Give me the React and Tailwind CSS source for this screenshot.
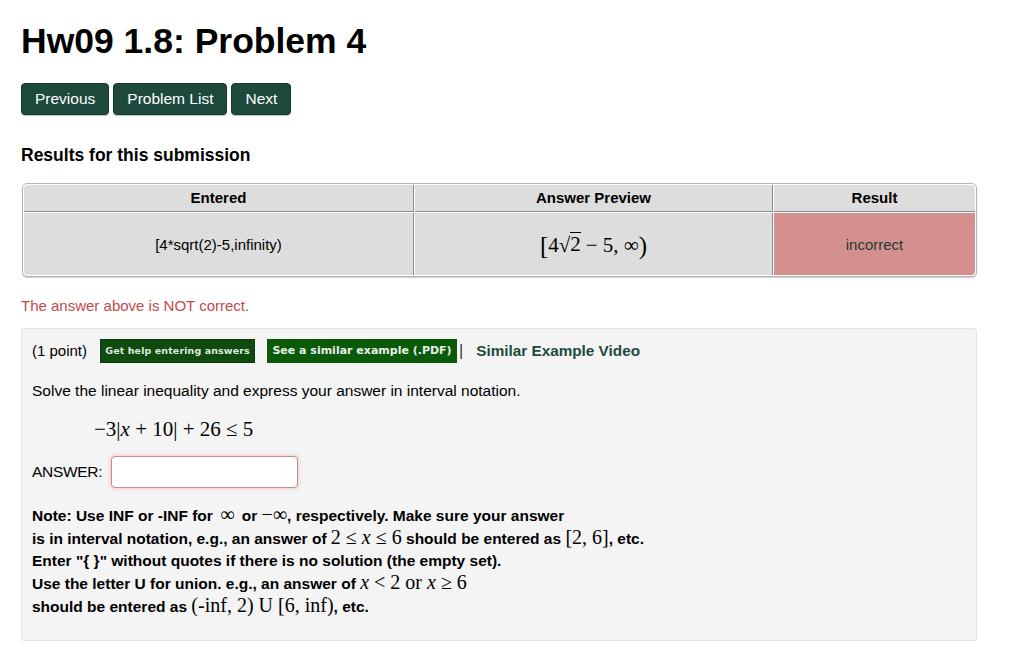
const serif = { fontFamily: '"Liberation Serif", "Times New Roman", serif' };

const NavButton = ({ children }) => (
  <button className="h-[32px] px-[13px] rounded-[4px] bg-[#1e4a3e] border border-[#173a31] text-white text-[15.5px] leading-none shadow-[0_1px_1px_rgba(0,0,0,0.25)]">
    {children}
  </button>
);

const Cell = ({ children, className = "" }) => (
  <div className={`flex items-center justify-center border-r border-b border-[#8a8a8a] ${className}`}>
    {children}
  </div>
);

const M = ({ children, className = "" }) => (
  <span style={serif} className={`font-normal text-[20px] leading-none ${className}`}>
    {children}
  </span>
);

export default function App() {
  return (
    <div
      className="w-[1024px] h-[663px] bg-white text-black overflow-hidden"
      style={{ fontFamily: '"Liberation Sans", Arial, sans-serif' }}
    >
      <div className="pl-[21px] pr-[47px] pt-[21px]">
        <h1 className="text-[35.5px] font-bold leading-[40px]">Hw09 1.8: Problem 4</h1>

        <div className="flex gap-[4px] mt-[22px]">
          <NavButton>Previous</NavButton>
          <NavButton>Problem List</NavButton>
          <NavButton>Next</NavButton>
        </div>

        <h2 className="mt-[30px] text-[17.5px] font-bold leading-[20px]">Results for this submission</h2>

        <div className="mt-[18px] ml-[1px] w-[955px] rounded-[5px] border border-[#b5b5b5] bg-white p-[1px] shadow-[0_1px_1px_rgba(0,0,0,0.2)]">
          <div className="grid grid-cols-[390px_358px_1fr] gap-[1px] rounded-[4px] overflow-hidden">
            <Cell className="h-[27px] bg-[#dddddd] font-bold text-[15px]">Entered</Cell>
            <Cell className="h-[27px] bg-[#dddddd] font-bold text-[15px]">Answer Preview</Cell>
            <Cell className="h-[27px] bg-[#dddddd] font-bold text-[15px] border-r-0">Result</Cell>
            <Cell className="h-[62px] bg-[#dddddd] text-[15px] border-b-0 pt-[3px]">[4*sqrt(2)-5,infinity)</Cell>
            <Cell className="h-[62px] bg-[#dddddd] border-b-0 pt-[3px]">
              <span style={serif} className="text-[21px] flex items-center">
                <span className="text-[25px] font-light leading-none">[</span>
                4
                <span className="inline-flex items-start">
                  <span className="text-[21px]">√</span>
                  <span className="border-t border-black leading-[22px] mt-[2px]">2</span>
                </span>
                <span className="mx-[5px]">−</span>5,&nbsp;∞
                <span className="text-[25px] font-light leading-none">)</span>
              </span>
            </Cell>
            <Cell className="h-[62px] bg-[#d48f8f] border-r-0 border-b-0 text-[15px] text-[#1f3b33] pt-[3px]">incorrect</Cell>
          </div>
        </div>

        <p className="mt-[19px] text-[15px] text-[#c24a4a] leading-[20px]">The answer above is NOT correct.</p>

        <div className="mt-[12px] w-[956px] h-[313px] bg-[#f4f4f4] border border-[#e2e2e2] rounded-[3px] px-[10px] pt-[10px]">
          <div className="flex items-center text-[15px] h-[24px]">
            <span className="mr-[13px]">(1 point)</span>
            <span
              className="h-[24px] w-[155px] flex items-center justify-center bg-[#0f4a0f] border border-[#0a3a0a] text-[#dfe9df] text-[9.5px] font-bold tracking-[0.1px]"
              style={{ fontFamily: '"DejaVu Sans", Verdana, sans-serif' }}
            >
              Get help entering answers
            </span>
            <span
              className="ml-[12px] h-[24px] w-[190px] flex items-center justify-center bg-[#0a5a0a] text-[#e6efe6] text-[11px] font-bold"
              style={{ fontFamily: '"DejaVu Sans", Verdana, sans-serif' }}
            >
              See a similar example (.PDF)
            </span>
            <span className="ml-[2px] text-[#333] text-[16px]">|</span>
            <span className="ml-[13px] text-[15.3px] font-bold text-[#1e4a3e]">Similar Example Video</span>
          </div>

          <p className="mt-[18px] text-[15.5px] leading-[20px]">
            Solve the linear inequality and express your answer in interval notation.
          </p>

          <p style={serif} className="mt-[16px] ml-[62px] text-[21px] leading-[24px]">
            −3|<i>x</i> + 10| + 26 ≤ 5
          </p>

          <div className="flex items-center mt-[15px]">
            <span className="text-[15.5px] tracking-[-0.3px]">ANSWER:</span>
            <input
              type="text"
              className="ml-[9px] w-[187px] h-[32px] bg-white border border-[#d88585] rounded-[4px] shadow-[0_0_4px_rgba(200,80,80,0.35)] outline-none"
            />
          </div>

          <div className="mt-[16px] text-[15.5px] font-bold leading-[22px]">
            <p>
              Note: Use INF or -INF for <M className="mx-[3px]">∞</M> or <M>−∞</M>, respectively. Make sure your answer
            </p>
            <p>
              is in interval notation, e.g., an answer of <M>2 ≤ <i>x</i> ≤ 6</M> should be entered as <M>[2, 6]</M>, etc.
            </p>
            <p>Enter "{"{ }"}" without quotes if there is no solution (the empty set).</p>
            <p>
              Use the letter U for union. e.g., an answer of <M><i>x</i> &lt; 2 or <i>x</i> ≥ 6</M>
            </p>
            <p>
              should be entered as <M>(-inf, 2) U [6, inf)</M>, etc.
            </p>
          </div>
        </div>
      </div>
    </div>
  );
}
